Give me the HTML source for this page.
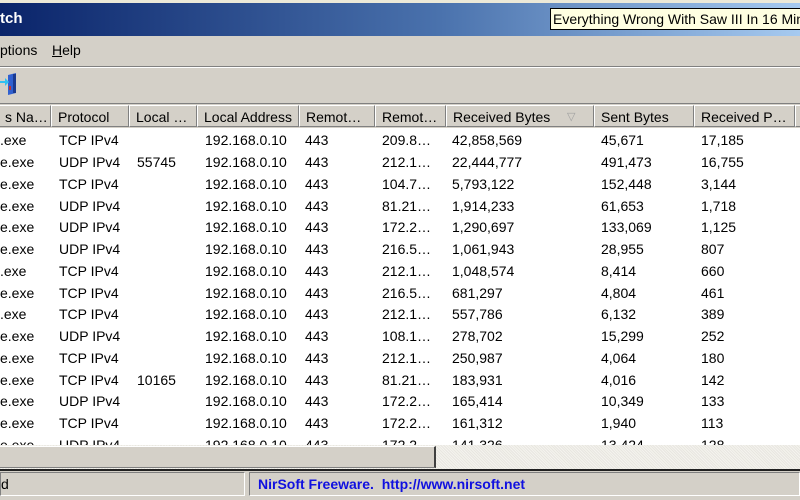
<!DOCTYPE html>
<html><head><style>
body{margin:0;width:800px;height:500px;overflow:hidden;background:#d4d0c8;font-family:"Liberation Sans","DejaVu Sans",sans-serif;font-size:14px;position:relative}
.a{position:absolute;white-space:nowrap}
#title{left:0;top:3px;width:800px;height:33px;background:linear-gradient(90deg,#0a246a 0%,#4a72ad 55%,#a6caf0 100%);}
#tip{left:550px;top:8px;width:260px;height:20px;background:#ffffe1;border:1px solid #000;color:#000;line-height:20px;padding-left:2px;font-size:14px}
.hd{position:absolute;top:105px;height:22px;line-height:22px;background:#d4d0c8;border-right:1px solid #808080;border-bottom:1px solid #808080;border-left:1px solid #fff;border-top:1px solid #fff;box-sizing:border-box;padding-left:6px;overflow:hidden}
#list{left:0;top:128px;width:800px;height:317px;background:#fff;overflow:hidden}
.r{position:absolute;left:0;height:22px;line-height:22px;width:800px}
.r span{position:absolute}
</style></head><body>
<div class="a" style="left:0;top:0;width:800px;height:3px;background:#ece9d8"></div>
<div class="a" id="title"><span style="position:absolute;left:0;top:7px;color:#fff;font-weight:bold;font-size:15px">tch</span></div>
<div class="a" id="tip">Everything Wrong With Saw III In 16 Minutes</div>
<div class="a" style="left:0;top:42px">ptions</div>
<div class="a" style="left:52px;top:42px"><u>H</u>elp</div>
<div class="a" style="left:0;top:66px;width:800px;height:1px;background:#808080"></div>
<div class="a" style="left:0;top:67px;width:800px;height:1px;background:#fff"></div>
<svg class="a" style="left:0;top:72px" width="18" height="24"><path d="M8 3l8-2v20l-8 2z" fill="#3060d0"/><rect x="13" y="2" width="3" height="19" fill="#1a3a90"/><path d="M0 9h5v-3l4 4-4 4v-3H0z" fill="#30c0f0"/><rect x="9" y="14" width="2" height="4" fill="#c03030"/></svg>
<div class="a" style="left:0;top:103px;width:800px;height:1px;background:#808080"></div>
<div class="hd" style="left:-2px;width:53px">s Na…</div>
<div class="hd" style="left:51px;width:78px">Protocol</div>
<div class="hd" style="left:129px;width:68px">Local …</div>
<div class="hd" style="left:197px;width:102px">Local Address</div>
<div class="hd" style="left:299px;width:76px">Remot…</div>
<div class="hd" style="left:375px;width:71px">Remot…</div>
<div class="hd" style="left:446px;width:148px">Received Bytes<span style="position:absolute;left:120px;color:#a0a0a0;font-size:11px">▽</span></div>
<div class="hd" style="left:594px;width:100px">Sent Bytes</div>
<div class="hd" style="left:694px;width:101px">Received P…</div>
<div class="hd" style="left:795px;width:10px"></div>
<div class="a" id="list">
<div class="r" style="top:1px"><span style="left:0">.exe</span><span style="left:59px">TCP IPv4</span><span style="left:205px">192.168.0.10</span><span style="left:305px">443</span><span style="left:382px">209.8…</span><span style="left:452px">42,858,569</span><span style="left:601px">45,671</span><span style="left:701px">17,185</span></div>
<div class="r" style="top:23px"><span style="left:0">e.exe</span><span style="left:59px">UDP IPv4</span><span style="left:137px">55745</span><span style="left:205px">192.168.0.10</span><span style="left:305px">443</span><span style="left:382px">212.1…</span><span style="left:452px">22,444,777</span><span style="left:601px">491,473</span><span style="left:701px">16,755</span></div>
<div class="r" style="top:45px"><span style="left:0">e.exe</span><span style="left:59px">TCP IPv4</span><span style="left:205px">192.168.0.10</span><span style="left:305px">443</span><span style="left:382px">104.7…</span><span style="left:452px">5,793,122</span><span style="left:601px">152,448</span><span style="left:701px">3,144</span></div>
<div class="r" style="top:67px"><span style="left:0">e.exe</span><span style="left:59px">UDP IPv4</span><span style="left:205px">192.168.0.10</span><span style="left:305px">443</span><span style="left:382px">81.21…</span><span style="left:452px">1,914,233</span><span style="left:601px">61,653</span><span style="left:701px">1,718</span></div>
<div class="r" style="top:88px"><span style="left:0">e.exe</span><span style="left:59px">UDP IPv4</span><span style="left:205px">192.168.0.10</span><span style="left:305px">443</span><span style="left:382px">172.2…</span><span style="left:452px">1,290,697</span><span style="left:601px">133,069</span><span style="left:701px">1,125</span></div>
<div class="r" style="top:110px"><span style="left:0">e.exe</span><span style="left:59px">UDP IPv4</span><span style="left:205px">192.168.0.10</span><span style="left:305px">443</span><span style="left:382px">216.5…</span><span style="left:452px">1,061,943</span><span style="left:601px">28,955</span><span style="left:701px">807</span></div>
<div class="r" style="top:132px"><span style="left:0">.exe</span><span style="left:59px">TCP IPv4</span><span style="left:205px">192.168.0.10</span><span style="left:305px">443</span><span style="left:382px">212.1…</span><span style="left:452px">1,048,574</span><span style="left:601px">8,414</span><span style="left:701px">660</span></div>
<div class="r" style="top:154px"><span style="left:0">e.exe</span><span style="left:59px">TCP IPv4</span><span style="left:205px">192.168.0.10</span><span style="left:305px">443</span><span style="left:382px">216.5…</span><span style="left:452px">681,297</span><span style="left:601px">4,804</span><span style="left:701px">461</span></div>
<div class="r" style="top:175px"><span style="left:0">.exe</span><span style="left:59px">TCP IPv4</span><span style="left:205px">192.168.0.10</span><span style="left:305px">443</span><span style="left:382px">212.1…</span><span style="left:452px">557,786</span><span style="left:601px">6,132</span><span style="left:701px">389</span></div>
<div class="r" style="top:197px"><span style="left:0">e.exe</span><span style="left:59px">UDP IPv4</span><span style="left:205px">192.168.0.10</span><span style="left:305px">443</span><span style="left:382px">108.1…</span><span style="left:452px">278,702</span><span style="left:601px">15,299</span><span style="left:701px">252</span></div>
<div class="r" style="top:219px"><span style="left:0">e.exe</span><span style="left:59px">TCP IPv4</span><span style="left:205px">192.168.0.10</span><span style="left:305px">443</span><span style="left:382px">212.1…</span><span style="left:452px">250,987</span><span style="left:601px">4,064</span><span style="left:701px">180</span></div>
<div class="r" style="top:241px"><span style="left:0">e.exe</span><span style="left:59px">TCP IPv4</span><span style="left:137px">10165</span><span style="left:205px">192.168.0.10</span><span style="left:305px">443</span><span style="left:382px">81.21…</span><span style="left:452px">183,931</span><span style="left:601px">4,016</span><span style="left:701px">142</span></div>
<div class="r" style="top:262px"><span style="left:0">e.exe</span><span style="left:59px">UDP IPv4</span><span style="left:205px">192.168.0.10</span><span style="left:305px">443</span><span style="left:382px">172.2…</span><span style="left:452px">165,414</span><span style="left:601px">10,349</span><span style="left:701px">133</span></div>
<div class="r" style="top:284px"><span style="left:0">e.exe</span><span style="left:59px">TCP IPv4</span><span style="left:205px">192.168.0.10</span><span style="left:305px">443</span><span style="left:382px">172.2…</span><span style="left:452px">161,312</span><span style="left:601px">1,940</span><span style="left:701px">113</span></div>
<div class="r" style="top:306px"><span style="left:0">e.exe</span><span style="left:59px">UDP IPv4</span><span style="left:205px">192.168.0.10</span><span style="left:305px">443</span><span style="left:382px">172.2…</span><span style="left:452px">141,326</span><span style="left:601px">13,424</span><span style="left:701px">128</span></div>
</div>
<div class="a" style="left:0;top:445px;width:800px;height:24px;background:repeating-linear-gradient(45deg,#e8e6e0 0 1px,#f4f3ee 1px 2px)"></div>
<div class="a" style="left:0;top:446px;width:436px;height:22px;background:#d4d0c8;border-top:1px solid #fff;border-right:2px solid #404040;border-bottom:1px solid #808080;box-sizing:border-box"></div>
<div class="a" style="left:0;top:469px;width:800px;height:2px;background:#202020"></div>
<div class="a" style="left:0;top:472px;width:245px;height:24px;border:1px solid;border-color:#808080 #fff #fff #808080;box-sizing:border-box;line-height:22px">d</div>
<div class="a" style="left:249px;top:472px;width:551px;height:24px;border:1px solid;border-color:#808080 #fff #fff #808080;box-sizing:border-box;line-height:22px;padding-left:8px;color:#1010e0;font-weight:bold;font-size:14px">NirSoft Freeware.&nbsp; http://www.nirsoft.net</div>
</body></html>
